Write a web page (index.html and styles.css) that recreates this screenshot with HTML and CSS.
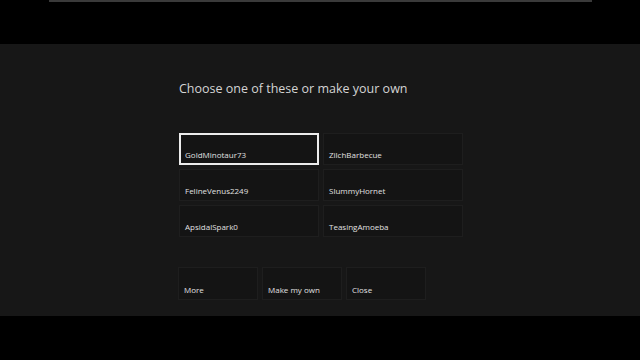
FILE: index.html
```
<!DOCTYPE html>
<html lang="en">
<head>
  <meta charset="UTF-8">
  <title>Choose a gamertag</title>
  <link rel="stylesheet" href="styles.css">
</head>
<body>
  <div class="topline"></div>

  <div class="panel">
    <h1 class="title">Choose one of these or make your own</h1>

    <div class="names">
      <div class="tile selected">GoldMinotaur73</div>
      <div class="tile">ZilchBarbecue</div>
      <div class="tile">FelineVenus2249</div>
      <div class="tile">SlummyHornet</div>
      <div class="tile">ApsidalSpark0</div>
      <div class="tile">TeasingAmoeba</div>
    </div>

    <div class="actions">
      <div class="tile btn">More</div>
      <div class="tile btn">Make my own</div>
      <div class="tile btn">Close</div>
    </div>
  </div>
</body>
</html>
```

FILE: styles.css
```
body {
  margin: 0;
  background: #000;
  font-family: "Open Sans", "Noto Sans", sans-serif;
  color: #e6e6e6;
  width: 640px;
  height: 360px;
  overflow: hidden;
}

.topline {
  height: 2px;
  margin: 0 48px 0 49px;
  background: #3a3a3a;
}

.panel {
  margin-top: 42px;
  height: 272px;
  background: #171717;
  padding: 0 0 0 179px;
  box-sizing: border-box;
  overflow: hidden;
}

.title {
  margin: 0;
  padding-top: 37px;
  font-size: 12.5px;
  line-height: 16px;
  font-weight: normal;
  color: #d4d4d4;
}

.names {
  display: grid;
  grid-template-columns: 140px 140px;
  grid-auto-rows: 32px;
  column-gap: 4px;
  row-gap: 4px;
  margin-top: 36px;
}

.tile {
  display: flex;
  align-items: flex-end;
  padding: 0 5px 4px;
  box-sizing: border-box;
  background: #141414;
  border: 1px solid #1e1e1e;
  font-size: 8px;
  line-height: 10px;
  color: #e0e0e0;
}

.tile.selected {
  border: 2px solid #ececec;
  padding: 0 4px 3px;
}

.actions {
  display: grid;
  grid-template-columns: 80px 80px 80px;
  grid-auto-rows: 33px;
  column-gap: 4px;
  margin-top: 30px;
  margin-left: -1px;
}
```
